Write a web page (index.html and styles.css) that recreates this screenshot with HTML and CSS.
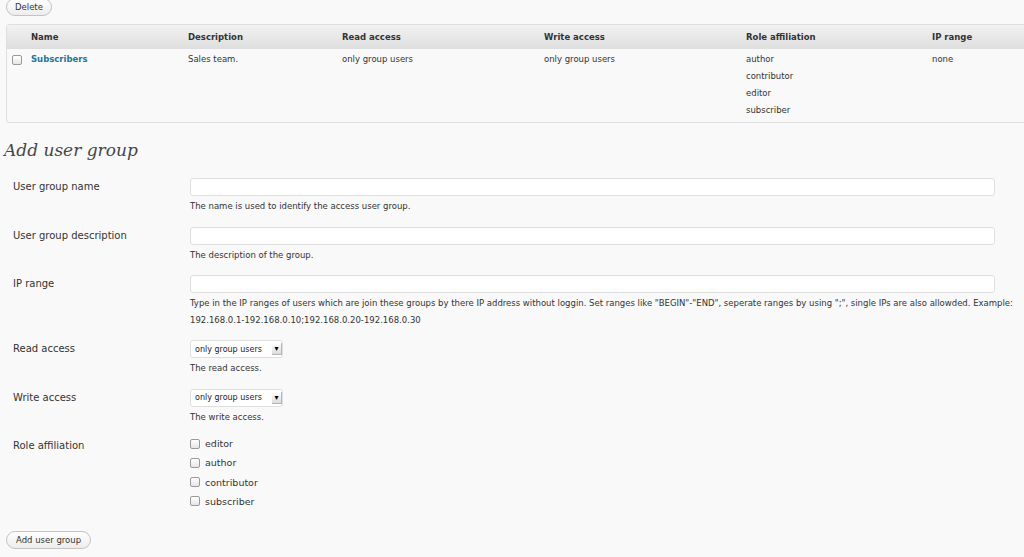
FILE: index.html
```html
<!DOCTYPE html>
<html lang="en">
<head>
    <meta charset="UTF-8">
    <title>User groups</title>
    <link rel="stylesheet" href="styles.css">
</head>
<body>
    <div class="wrap">
        <!-- Bulk action -->
        <div class="tablenav">
            <button class="button delete-button">Delete</button>
        </div>

        <!-- Existing groups -->
        <div class="table-box">
            <table class="widefat">
                <colgroup>
                    <col class="c-check">
                    <col class="c-name">
                    <col class="c-desc">
                    <col class="c-read">
                    <col class="c-write">
                    <col class="c-role">
                    <col class="c-ip">
                </colgroup>
                <thead>
                    <tr>
                        <th></th>
                        <th>Name</th>
                        <th>Description</th>
                        <th>Read access</th>
                        <th>Write access</th>
                        <th>Role affiliation</th>
                        <th>IP range</th>
                    </tr>
                </thead>
                <tbody>
                    <tr>
                        <td><input type="checkbox" class="check"></td>
                        <td><a href="#" class="row-title">Subscribers</a></td>
                        <td>Sales team.</td>
                        <td>only group users</td>
                        <td>only group users</td>
                        <td>
                            <ul class="role-list">
                                <li>author</li>
                                <li>contributor</li>
                                <li>editor</li>
                                <li>subscriber</li>
                            </ul>
                        </td>
                        <td>none</td>
                    </tr>
                </tbody>
            </table>
        </div>

        <h2>Add user group</h2>

        <form class="form-table">
            <div class="form-row">
                <label class="form-label">User group name</label>
                <div class="form-field">
                    <input type="text" class="text-input">
                    <div class="desc">The name is used to identify the access user group.</div>
                </div>
            </div>
            <div class="form-row">
                <label class="form-label">User group description</label>
                <div class="form-field">
                    <input type="text" class="text-input">
                    <div class="desc">The description of the group.</div>
                </div>
            </div>
            <div class="form-row">
                <label class="form-label">IP range</label>
                <div class="form-field">
                    <input type="text" class="text-input">
                    <div class="desc">Type in the IP ranges of users which are join these groups by there IP address without loggin. Set ranges like "BEGIN"-"END", seperate ranges by using ";", single IPs are also allowded. Example: 192.168.0.1-192.168.0.10;192.168.0.20-192.168.0.30</div>
                </div>
            </div>
            <div class="form-row">
                <label class="form-label">Read access</label>
                <div class="form-field">
                    <div class="select-box">
                        <select><option>only group users</option></select>
                        <span class="select-arrow">&#9662;</span>
                    </div>
                    <div class="desc">The read access.</div>
                </div>
            </div>
            <div class="form-row">
                <label class="form-label">Write access</label>
                <div class="form-field">
                    <div class="select-box">
                        <select><option>only group users</option></select>
                        <span class="select-arrow">&#9662;</span>
                    </div>
                    <div class="desc">The write access.</div>
                </div>
            </div>
            <div class="form-row">
                <label class="form-label">Role affiliation</label>
                <div class="form-field">
                    <ul class="check-list">
                        <li><input type="checkbox" class="check"> editor</li>
                        <li><input type="checkbox" class="check"> author</li>
                        <li><input type="checkbox" class="check"> contributor</li>
                        <li><input type="checkbox" class="check"> subscriber</li>
                    </ul>
                </div>
            </div>

            <div class="submit">
                <button type="button" class="button">Add user group</button>
            </div>
        </form>
    </div>
</body>
</html>
```

FILE: styles.css
```css
html, body {
    height: 100%;
}

body {
    margin: 0;
    background-color: #f9f9f9;
    font-family: "DejaVu Sans", Verdana, sans-serif;
    color: #333;
    overflow: hidden;
}

.wrap {
    padding: 0 0 0 6px;
}

/* Buttons */
.button {
    font-family: "DejaVu Sans", Verdana, sans-serif;
    font-size: 8.5px;
    color: #333;
    background: linear-gradient(#ffffff, #ededed);
    border: 1px solid #c4c4c4;
    border-radius: 11px;
    padding: 0 9px;
    height: 18px;
    cursor: pointer;
}

.tablenav {
    height: 29px;
    margin-top: -5px;
}

.delete-button {
    padding: 0 8px;
}

/* Group table */
.table-box {
    width: 1030px;
    border: 1px solid #dfdfdf;
    border-radius: 3px;
    background-color: #f9f9f9;
}

.widefat {
    width: 100%;
    border-collapse: collapse;
    table-layout: fixed;
    font-size: 8.5px;
}

.c-check { width: 24px; }
.c-name { width: 157px; }
.c-desc { width: 154px; }
.c-read { width: 202px; }
.c-write { width: 202px; }
.c-role { width: 186px; }

.widefat th {
    height: 24px;
    text-align: left;
    font-weight: bold;
    padding: 0;
    background: linear-gradient(#f2f2f2, #dedede);
}

.widefat td {
    vertical-align: top;
    padding: 4px 0 0 0;
    height: 69px;
    line-height: 12px;
}

.widefat td:first-child {
    padding-left: 5px;
}

.row-title {
    color: #21759b;
    font-weight: bold;
    text-decoration: none;
}

.role-list {
    list-style: none;
    margin: 0;
    padding: 0;
}

.role-list li {
    line-height: 17px;
    margin-top: -2px;
    margin-bottom: 2px;
}

/* Checkboxes */
.check {
    appearance: none;
    -webkit-appearance: none;
    width: 10px;
    height: 10px;
    margin: 0;
    border: 1px solid #9a9a9a;
    border-radius: 2px;
    background: linear-gradient(#ffffff, #e6e6e6);
    vertical-align: middle;
}

/* Add form */
h2 {
    font-family: "DejaVu Serif", Georgia, serif;
    font-style: italic;
    font-weight: normal;
    font-size: 17px;
    color: #464646;
    margin: 0 0 0 -2px;
    padding: 14px 0 15px 0;
    line-height: 26px;
}

.form-table {
    margin: 0;
}

.form-row {
    display: grid;
    grid-template-columns: 184px 1fr;
    padding-bottom: 12px;
}

.form-label {
    font-size: 10px;
    line-height: 18px;
    padding-left: 7px;
}

.text-input {
    display: block;
    box-sizing: border-box;
    width: 805px;
    height: 18px;
    margin: 0 0 2px 0;
    border: 1px solid #dfdfdf;
    border-radius: 3px;
    background-color: #fff;
}

.desc {
    font-size: 8.5px;
    line-height: 16.5px;
}

.select-box {
    display: flex;
    align-items: center;
    box-sizing: border-box;
    width: 93px;
    height: 18px;
    margin-bottom: 2px;
    border: 1px solid #dfdfdf;
    border-radius: 3px;
    background-color: #fff;
}

.select-box select {
    appearance: none;
    -webkit-appearance: none;
    border: none;
    background: transparent;
    font-family: "DejaVu Sans", Verdana, sans-serif;
    font-size: 8px;
    color: #222;
    padding: 0 0 0 4px;
    width: 81px;
}

.select-arrow {
    display: flex;
    align-items: center;
    justify-content: center;
    width: 9px;
    height: 11px;
    font-size: 8px;
    color: #000;
    background: linear-gradient(#ffffff, #dcdcdc);
    border: 1px solid #b5b5b5;
    border-width: 0 1px 1px 0;
}

.check-list {
    list-style: none;
    margin: -3px 0 0 0;
    padding: 0;
    font-size: 9.5px;
}

.check-list li {
    line-height: 19.3px;
}

.check-list .check {
    margin-right: 2px;
    position: relative;
    top: -1px;
}

.submit {
    padding-top: 5px;
}
```
